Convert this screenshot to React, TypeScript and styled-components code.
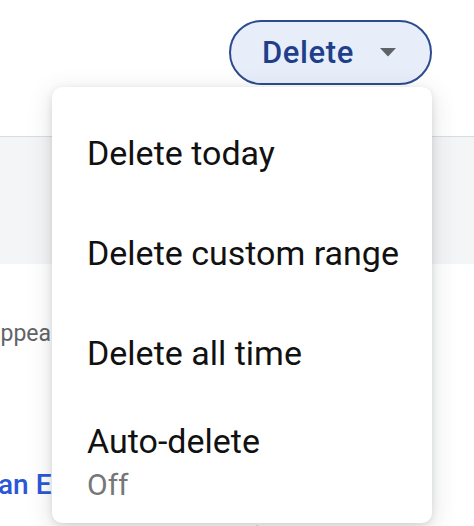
import * as React from 'react';
import styled, { createGlobalStyle } from 'styled-components';

const GlobalStyle = createGlobalStyle`
  html, body {
    margin: 0;
    padding: 0;
    background: #ffffff;
    overflow: hidden;
  }
  body {
    font-family: Roboto, "Liberation Sans", Arial, sans-serif;
  }
`;

const Page = styled.div`
  position: relative;
  width: 474px;
  height: 526px;
  overflow: hidden;
  background: #ffffff;
`;

const TopBar = styled.div`
  display: flex;
  justify-content: flex-end;
  height: 137px;
  padding: 20px 42px 0 0;
  box-sizing: border-box;
  border-bottom: 1px solid #dadce0;
`;

const DeleteButton = styled.button`
  display: flex;
  align-items: center;
  height: 65px;
  width: 203px;
  box-sizing: border-box;
  padding: 0 34px 0 31px;
  border: 2px solid #2c4a8e;
  border-radius: 33px;
  background: #e8eef9;
  color: #1f3e8c;
  font-family: Roboto, "Liberation Sans", sans-serif;
  font-size: 31px;
  font-weight: 500;
  cursor: pointer;
`;

const ButtonLabel = styled.span`
  flex: 1;
  text-align: left;
  letter-spacing: 0.6px;
`;

const Band = styled.div`
  height: 127px;
  background: #f4f5f7;
`;

const Content = styled.div`
  display: flex;
  flex-direction: column;
  padding-top: 57px;
`;

const Hint = styled.p`
  margin: 0 0 0 -12px;
  font-size: 23px;
  line-height: 26px;
  color: #5f6368;
  white-space: nowrap;
`;

const Link = styled.a`
  margin: 122px 0 0 -2px;
  font-size: 28px;
  font-weight: 500;
  line-height: 32px;
  color: #2a56d9;
  white-space: nowrap;
  text-decoration: none;
`;

const Faint = styled.p`
  margin: 20px 0 0 200px;
  font-size: 24px;
  color: #e2e3e6;
  white-space: nowrap;
`;

const Menu = styled.div`
  position: absolute;
  left: 52px;
  top: 87px;
  width: 380px;
  box-sizing: border-box;
  padding: 16px 0 0;
  background: #ffffff;
  border-radius: 10px;
  box-shadow: 0 6px 24px rgba(60, 64, 67, 0.18), 0 2px 6px rgba(60, 64, 67, 0.12);
`;

const Item = styled.div<{ $last?: boolean }>`
  display: flex;
  flex-direction: column;
  padding: ${(p) => (p.$last ? '18px 35px 21px' : '30px 35px')};
  color: #111111;
  font-size: 34px;
  line-height: 40px;
  white-space: nowrap;
`;

const SubText = styled.span`
  margin-top: 7px;
  font-size: 30px;
  line-height: 34px;
  color: #777777;
`;

const Caret = () => (
  <svg width="16" height="9" viewBox="0 0 16 9">
    <path d="M0 0 L16 0 L8 8.5 Z" fill="#5f6368" />
  </svg>
);

const options = ['Delete today', 'Delete custom range', 'Delete all time'];

export default function App() {
  return (
    <Page>
      <GlobalStyle />
      <TopBar>
        <DeleteButton>
          <ButtonLabel>Delete</ButtonLabel>
          <Caret />
        </DeleteButton>
      </TopBar>
      <Band />
      <Content>
        <Hint>appears here</Hint>
        <Link>an Example</Link>
        <Faint>Timeline</Faint>
      </Content>
      <Menu>
        {options.map((o) => (
          <Item key={o}>{o}</Item>
        ))}
        <Item $last>
          Auto-delete
          <SubText>Off</SubText>
        </Item>
      </Menu>
    </Page>
  );
}
